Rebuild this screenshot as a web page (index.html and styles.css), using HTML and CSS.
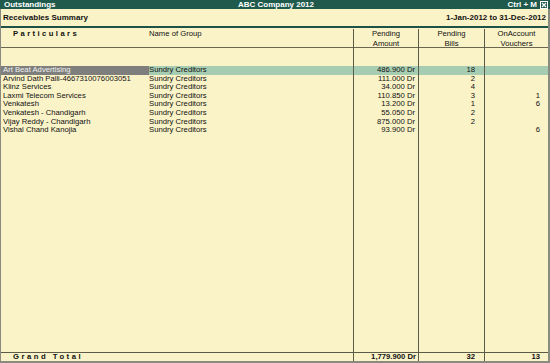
FILE: index.html
```html
<!DOCTYPE html>
<html lang="en">
<head>
    <meta charset="UTF-8">
    <title>Outstandings</title>
    <link rel="stylesheet" href="styles.css">
</head>
<body>
    <div class="window">
        <div class="titlebar">
            <span class="title-left">Outstandings</span>
            <span class="title-center">ABC Company 2012</span>
            <span class="title-right">
                Ctrl + M
                <svg class="close-box" width="8" height="8" viewBox="0 0 8 8">
                    <rect x="0.5" y="0.5" width="7" height="7" fill="none" stroke="#fff" stroke-width="1"/>
                    <path d="M2 2 L6 6 M6 2 L2 6" stroke="#fff" stroke-width="1.2"/>
                </svg>
            </span>
        </div>

        <div class="content">
            <div class="subhead">
                <span>Receivables Summary</span>
                <span>1-Jan-2012 to 31-Dec-2012</span>
            </div>

            <!-- Column headings -->
            <div class="row head-row">
                <div class="cell particulars-head">Particulars</div>
                <div class="cell">Name of Group</div>
                <div class="cell col-line center">Pending<br>Amount</div>
                <div class="cell col-line center">Pending<br>Bills</div>
                <div class="cell col-line center">OnAccount<br>Vouchers</div>
            </div>

            <div class="row spacer-row">
                <div class="cell"></div>
                <div class="cell"></div>
                <div class="cell col-line"></div>
                <div class="cell col-line"></div>
                <div class="cell col-line"></div>
            </div>

            <!-- Ledger rows -->
            <div class="row data-row selected">
                <div class="cell name">Art Beat Advertising</div>
                <div class="cell">Sundry Creditors</div>
                <div class="cell col-line amount">486.900 Dr</div>
                <div class="cell col-line count">18</div>
                <div class="cell col-line count"></div>
            </div>
            <div class="row data-row">
                <div class="cell name">Arvind Dath Palli-4667310076003051</div>
                <div class="cell">Sundry Creditors</div>
                <div class="cell col-line amount">111.000 Dr</div>
                <div class="cell col-line count">2</div>
                <div class="cell col-line count"></div>
            </div>
            <div class="row data-row">
                <div class="cell name">Klinz Services</div>
                <div class="cell">Sundry Creditors</div>
                <div class="cell col-line amount">34.000 Dr</div>
                <div class="cell col-line count">4</div>
                <div class="cell col-line count"></div>
            </div>
            <div class="row data-row">
                <div class="cell name">Laxmi Telecom Services</div>
                <div class="cell">Sundry Creditors</div>
                <div class="cell col-line amount">110.850 Dr</div>
                <div class="cell col-line count">3</div>
                <div class="cell col-line count">1</div>
            </div>
            <div class="row data-row">
                <div class="cell name">Venkatesh</div>
                <div class="cell">Sundry Creditors</div>
                <div class="cell col-line amount">13.200 Dr</div>
                <div class="cell col-line count">1</div>
                <div class="cell col-line count">6</div>
            </div>
            <div class="row data-row">
                <div class="cell name">Venkatesh - Chandigarh</div>
                <div class="cell">Sundry Creditors</div>
                <div class="cell col-line amount">55.050 Dr</div>
                <div class="cell col-line count">2</div>
                <div class="cell col-line count"></div>
            </div>
            <div class="row data-row">
                <div class="cell name">Vijay Reddy - Chandigarh</div>
                <div class="cell">Sundry Creditors</div>
                <div class="cell col-line amount">875.000 Dr</div>
                <div class="cell col-line count">2</div>
                <div class="cell col-line count"></div>
            </div>
            <div class="row data-row">
                <div class="cell name">Vishal Chand Kanojia</div>
                <div class="cell">Sundry Creditors</div>
                <div class="cell col-line amount">93.900 Dr</div>
                <div class="cell col-line count"></div>
                <div class="cell col-line count">6</div>
            </div>

            <!-- Empty space down to the total -->
            <div class="row filler-row">
                <div class="cell"></div>
                <div class="cell"></div>
                <div class="cell col-line"></div>
                <div class="cell col-line"></div>
                <div class="cell col-line"></div>
            </div>

            <div class="row total-row">
                <div class="cell total-label">Grand Total</div>
                <div class="cell"></div>
                <div class="cell col-line amount">1,779.900 Dr</div>
                <div class="cell col-line count">32</div>
                <div class="cell col-line count">13</div>
            </div>
        </div>
    </div>
</body>
</html>
```

FILE: styles.css
```css
/* General */
body {
    margin: 0;
    padding: 0;
    font-family: 'Liberation Sans', Arial, sans-serif;
    font-size: 7.7px;
    color: #111;
    background-color: #faf3c8;
}

.window {
    width: 550px;
    height: 363px;
    display: flex;
    flex-direction: column;
    background-color: #faf3c8;
}

/* Title bar */
.titlebar {
    height: 9px;
    display: grid;
    grid-template-columns: 1fr auto 1fr;
    align-items: center;
    padding: 0 2px 0 4px;
    background-color: #1f5a4d;
    background-image: radial-gradient(circle, #5f9586 0.5px, transparent 0.7px);
    background-size: 2px 2px;
    color: #fff;
    font-weight: bold;
    font-size: 8px;
    line-height: 9px;
}

.title-right {
    display: flex;
    justify-content: flex-end;
    align-items: center;
    gap: 3px;
}

.close-box {
    display: block;
}

/* Content area */
.content {
    flex: 1;
    display: flex;
    flex-direction: column;
    border-left: 1px solid #8a8a80;
    border-right: 2px solid #8a8a80;
    border-bottom: 2px solid #8a8a80;
}

.subhead {
    height: 17px;
    display: flex;
    justify-content: space-between;
    align-items: center;
    padding: 0 2px 0 2px;
    font-weight: bold;
    font-size: 8px;
    border-bottom: 2px solid #1d5247;
}

/* Rows share one column template */
.row {
    display: grid;
    grid-template-columns: 148px 204px 65px 66px 1fr;
}

.col-line {
    border-left: 1px solid #5c5a48;
}

.center {
    text-align: center;
}

.head-row {
    height: 18px;
    padding-top: 1px;
    line-height: 9.5px;
    border-bottom: 1px solid #6a6650;
}

.head-row .cell {
    padding-top: 0;
}

.particulars-head {
    padding-left: 12px;
    font-weight: bold;
    letter-spacing: 2.4px;
}

.spacer-row {
    height: 18px;
}

.data-row {
    height: 8.6px;
    line-height: 8.6px;
    white-space: nowrap;
}

.data-row .name {
    padding-left: 2px;
}

.amount {
    text-align: right;
    padding-right: 3px;
}

.count {
    text-align: right;
    padding-right: 9px;
}

.row .count:last-child {
    padding-right: 8px;
}

/* Selected ledger */
.selected .cell {
    background-color: #a6cdb1;
    background-image: radial-gradient(circle, #c3dfcb 0.5px, transparent 0.7px);
    background-size: 2px 2px;
}

.selected .cell.name {
    background: #7e7e7c;
    color: #eeeeee;
}

.filler-row {
    flex: 1;
}

/* Grand total */
.total-row {
    height: 8px;
    line-height: 8px;
    border-top: 1px solid #5c5a48;
    font-weight: bold;
}

.total-label {
    padding-left: 12px;
    letter-spacing: 2.5px;
}

.total-row .amount {
    padding-right: 2px;
}
```
